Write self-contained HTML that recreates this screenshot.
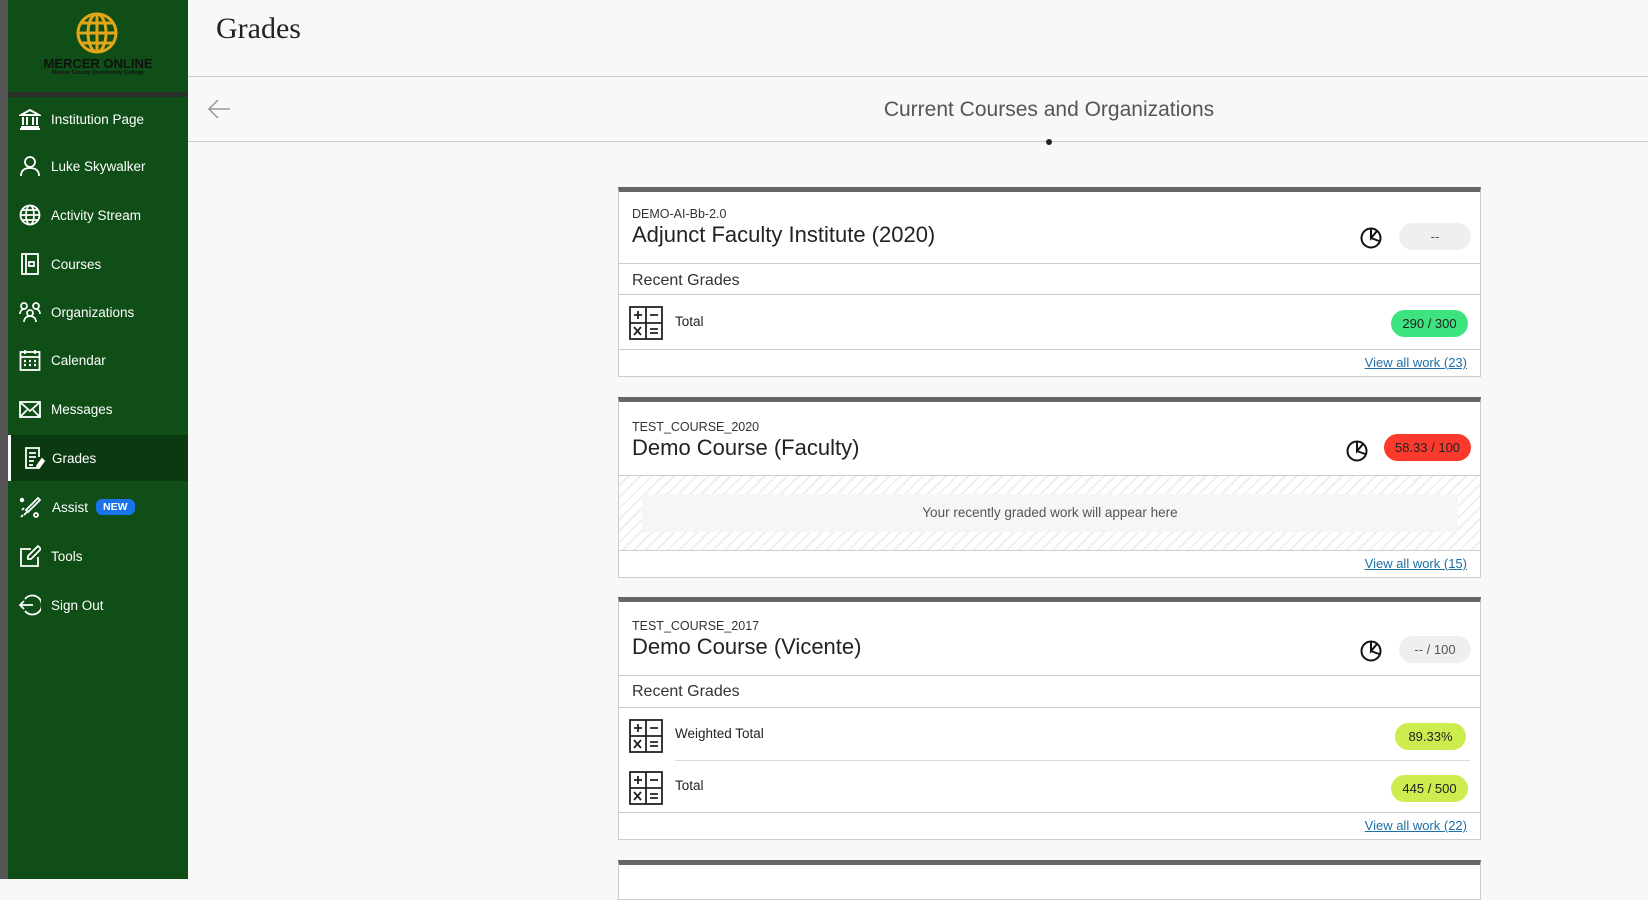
<!DOCTYPE html>
<html><head><meta charset="utf-8"><style>
*{margin:0;padding:0;box-sizing:border-box}
body{width:1648px;height:879px;overflow:hidden;background:#f8f8f8;font-family:"Liberation Sans",sans-serif;position:relative}
.abs{position:absolute}
.strip{left:0;top:0;width:8px;height:879px;background:#555}
.side{left:8px;top:0;width:180px;height:879px;background:#0f4e17}
.logo{left:8px;top:0;width:180px;height:92px;background:#0f4e17}
.bar{left:8px;top:92px;width:180px;height:5px;background:#2b2f2b}
.nav{left:8px;width:180px;height:46px;color:#fff;font-size:13.5px;display:flex;align-items:center}
.nav svg{position:absolute;left:11px}
.nav span{position:absolute;left:43px}
.sel{background:#0b3a10;border-left:3px solid #fff}
.card{position:absolute;left:618px;width:863px;background:#fff;border:1px solid #cdcdcd;border-top:5px solid #666}
.id{position:absolute;left:13px;font-size:12.5px;color:#333}
.tt{position:absolute;left:13px;font-size:22px;color:#222}
.sep{position:absolute;left:0;right:0;height:1px;background:#cdcdcd}
.rg{position:absolute;left:13px;font-size:16px;color:#333}
.lbl{position:absolute;left:56px;font-size:13.5px;color:#222}
.pill{position:absolute;height:27px;border-radius:14px;font-size:13px;color:#222;display:flex;align-items:center;justify-content:center}
.link{position:absolute;right:13px;font-size:13px;color:#1d6fa5;text-decoration:underline}
.calc{position:absolute;left:10px;width:34px;height:34px}
.pie{position:absolute;width:22px;height:22px}
</style></head><body>
<div class="abs strip"></div>
<div class="abs side"></div>
<div class="abs logo">
<svg class="abs" style="left:67px;top:11px" width="44" height="44" viewBox="0 0 44 44" fill="none" stroke="#e2a61a" stroke-width="3"><circle cx="22" cy="22" r="19"/><ellipse cx="22" cy="22" rx="9" ry="19"/><line x1="3" y1="22" x2="41" y2="22"/><line x1="6" y1="12" x2="38" y2="12"/><line x1="6" y1="32" x2="38" y2="32"/><line x1="22" y1="3" x2="22" y2="41"/></svg>
<div class="abs" style="left:0;width:180px;top:56px;text-align:center;font-weight:bold;font-size:13px;color:#111">MERCER ONLINE</div>
<div class="abs" style="left:0;width:180px;top:70px;text-align:center;font-weight:bold;font-size:5.5px;color:#111">Mercer County Community College</div>
</div>
<div class="abs bar"></div>

<div class="abs nav" style="top:96px"><svg width="22" height="22" viewBox="0 0 22 22" fill="none" stroke="#fff" stroke-width="2"><path d="M2 7 L11 2 L20 7 Z M4 9v8M8 9v8M14 9v8M18 9v8M2 19h18M1 21h20"/></svg><span>Institution Page</span></div>
<div class="abs nav" style="top:143px"><svg width="22" height="22" viewBox="0 0 22 22" fill="none" stroke="#fff" stroke-width="1.8"><circle cx="11" cy="7" r="5"/><path d="M2 21c0-6 4-8 9-8s9 2 9 8"/></svg><span>Luke Skywalker</span></div>
<div class="abs nav" style="top:192px"><svg width="22" height="22" viewBox="0 0 22 22" fill="none" stroke="#fff" stroke-width="1.8"><circle cx="11" cy="11" r="9.5"/><ellipse cx="11" cy="11" rx="4" ry="9.5"/><path d="M1.5 11h19M3 6h16M3 16h16"/></svg><span>Activity Stream</span></div>
<div class="abs nav" style="top:241px"><svg width="22" height="22" viewBox="0 0 22 22" fill="none" stroke="#fff" stroke-width="1.8"><rect x="3" y="1" width="16" height="20"/><path d="M7 1v20"/><rect x="10" y="9" width="5" height="4"/></svg><span>Courses</span></div>
<div class="abs nav" style="top:289px"><svg width="22" height="22" viewBox="0 0 22 22" fill="none" stroke="#fff" stroke-width="1.7"><circle cx="5" cy="5" r="3"/><circle cx="17" cy="5" r="3"/><circle cx="11" cy="12" r="3"/><path d="M1 13c0-3 2-5 4-5M21 13c0-3-2-5-4-5M5 21c0-4 3-6 6-6s6 2 6 6"/></svg><span>Organizations</span></div>
<div class="abs nav" style="top:337px"><svg width="22" height="22" viewBox="0 0 22 22" fill="none" stroke="#fff" stroke-width="1.8"><rect x="1.5" y="3" width="19" height="18"/><path d="M1.5 8h19M6 1v4M16 1v4"/><path d="M5 12h2M10 12h2M15 12h2M5 16h2M10 16h2M15 16h2" stroke-width="2.2"/></svg><span>Calendar</span></div>
<div class="abs nav" style="top:386px"><svg width="22" height="22" viewBox="0 0 22 22" fill="none" stroke="#fff" stroke-width="1.8"><rect x="1" y="4" width="20" height="15"/><path d="M1 4l10 9 10-9M1 19l7-7M21 19l-7-7"/></svg><span>Messages</span></div>
<div class="abs nav sel" style="top:435px"><svg style="left:12px" width="22" height="22" viewBox="0 0 22 22" fill="none" stroke="#fff" stroke-width="1.8"><path d="M16 10V1H3v20h10"/><path d="M6 6h7M6 10h7M6 14h5M6 18h4"/><path d="M19 12l-5 7v2h2l5-7z" fill="#fff"/></svg><span style="left:41px">Grades</span></div>
<div class="abs nav" style="top:484px"><svg width="22" height="22" viewBox="0 0 22 22" fill="none" stroke="#fff" stroke-width="1.8"><path d="M19 2l-12 12 2 2 12-12zM5 19l3-3M2 21l2-2M3 14l2-2"/><circle cx="17" cy="19" r="2"/><circle cx="3" cy="4" r="1.3" fill="#fff"/></svg><span style="left:44px">Assist</span><span style="left:88px;background:#1a73e8;border-radius:6px;font-size:10.5px;font-weight:bold;padding:2px 7px">NEW</span></div>
<div class="abs nav" style="top:533px"><svg width="22" height="22" viewBox="0 0 22 22" fill="none" stroke="#fff" stroke-width="1.8"><path d="M12 4H2v17h17v-9"/><path d="M19 1l3 3-10 10H9v-3z"/></svg><span>Tools</span></div>
<div class="abs nav" style="top:582px"><svg width="22" height="22" viewBox="0 0 22 22" fill="none" stroke="#fff" stroke-width="1.8"><path d="M6 5a9.5 9.5 0 1 1 0 12"/><path d="M14 11H1M5 7l-4 4 4 4"/></svg><span>Sign Out</span></div>

<div class="abs" style="left:216px;top:12px;font-family:'Liberation Serif',serif;font-size:30px;color:#222">Grades</div>
<div class="abs" style="left:188px;top:76px;width:1460px;height:1px;background:#ccc"></div>
<svg class="abs" style="left:207px;top:99px" width="24" height="20" viewBox="0 0 24 20" fill="none" stroke="#999" stroke-width="1.5"><path d="M23 10H2M11 1L2 10l9 9"/></svg>
<div class="abs" style="left:749px;width:600px;top:98px;text-align:center;font-size:21px;color:#555">Current Courses and Organizations</div>
<div class="abs" style="left:188px;top:141px;width:1460px;height:1px;background:#ccc"></div>
<div class="abs" style="left:1046px;top:139px;width:6px;height:6px;border-radius:3px;background:#222"></div>

<!-- card 1 -->
<div class="card" style="top:187px;height:190px">
 <div class="id" style="top:15px">DEMO-AI-Bb-2.0</div>
 <div class="tt" style="top:30px">Adjunct Faculty Institute (2020)</div>
 <svg class="pie" style="left:741px;top:35px" viewBox="0 0 22 22" fill="none" stroke="#111" stroke-width="2"><circle cx="11" cy="11" r="9.5"/><path d="M11 2v9l6-7M11 11l8 3"/></svg>
 <div class="pill" style="left:780px;top:31px;width:72px;background:#efefef;color:#555">--</div>
 <div class="sep" style="top:71px"></div>
 <div class="rg" style="top:80px">Recent Grades</div>
 <div class="sep" style="top:102px"></div>
 <svg class="calc" style="top:114px" viewBox="0 0 34 34" fill="none" stroke="#222" stroke-width="1.8"><rect x="1" y="1" width="32" height="32"/><path d="M17 1v32M1 17h32M5 9h8M9 5v8M21 9h8M5 21l7 8M12 21l-7 8M21 23h8M21 27h8"/></svg>
 <div class="lbl" style="top:122px">Total</div>
 <div class="pill" style="left:772px;top:118px;width:77px;background:#3de37f">290 / 300</div>
 <div class="sep" style="top:157px"></div>
 <div class="link" style="top:163px">View all work (23)</div>
</div>

<!-- card 2 -->
<div class="card" style="top:397px;height:181px">
 <div class="id" style="top:18px">TEST_COURSE_2020</div>
 <div class="tt" style="top:33px">Demo Course (Faculty)</div>
 <svg class="pie" style="left:727px;top:38px" viewBox="0 0 22 22" fill="none" stroke="#111" stroke-width="2"><circle cx="11" cy="11" r="9.5"/><path d="M11 2v9l6-7M11 11l8 3"/></svg>
 <div class="pill" style="left:765px;top:32px;width:87px;background:#fb3a2d">58.33 / 100</div>
 <div class="sep" style="top:73px"></div>
 <div class="abs" style="left:0;right:0;top:74px;height:74px;background:repeating-linear-gradient(135deg,#fff 0 6px,#efefef 6px 8px)"></div>
 <div class="abs" style="left:23px;right:22px;top:92px;height:38px;background:#f6f6f6;text-align:center;line-height:38px;font-size:13.5px;color:#555">Your recently graded work will appear here</div>
 <div class="sep" style="top:148px"></div>
 <div class="link" style="top:154px">View all work (15)</div>
</div>

<!-- card 3 -->
<div class="card" style="top:597px;height:243px">
 <div class="id" style="top:17px">TEST_COURSE_2017</div>
 <div class="tt" style="top:32px">Demo Course (Vicente)</div>
 <svg class="pie" style="left:741px;top:38px" viewBox="0 0 22 22" fill="none" stroke="#111" stroke-width="2"><circle cx="11" cy="11" r="9.5"/><path d="M11 2v9l6-7M11 11l8 3"/></svg>
 <div class="pill" style="left:780px;top:34px;width:72px;background:#efefef;color:#555">-- / 100</div>
 <div class="sep" style="top:73px"></div>
 <div class="rg" style="top:81px">Recent Grades</div>
 <div class="sep" style="top:105px"></div>
 <svg class="calc" style="top:117px" viewBox="0 0 34 34" fill="none" stroke="#222" stroke-width="1.8"><rect x="1" y="1" width="32" height="32"/><path d="M17 1v32M1 17h32M5 9h8M9 5v8M21 9h8M5 21l7 8M12 21l-7 8M21 23h8M21 27h8"/></svg>
 <div class="lbl" style="top:124px">Weighted Total</div>
 <div class="pill" style="left:776px;top:121px;width:71px;background:#cdec4d">89.33%</div>
 <div class="abs" style="left:56px;right:10px;top:158px;height:1px;background:#ddd"></div>
 <svg class="calc" style="top:169px" viewBox="0 0 34 34" fill="none" stroke="#222" stroke-width="1.8"><rect x="1" y="1" width="32" height="32"/><path d="M17 1v32M1 17h32M5 9h8M9 5v8M21 9h8M5 21l7 8M12 21l-7 8M21 23h8M21 27h8"/></svg>
 <div class="lbl" style="top:176px">Total</div>
 <div class="pill" style="left:772px;top:173px;width:77px;background:#cdec4d">445 / 500</div>
 <div class="sep" style="top:210px"></div>
 <div class="link" style="top:216px">View all work (22)</div>
</div>

<div class="card" style="top:860px;height:40px"></div>
</body></html>
